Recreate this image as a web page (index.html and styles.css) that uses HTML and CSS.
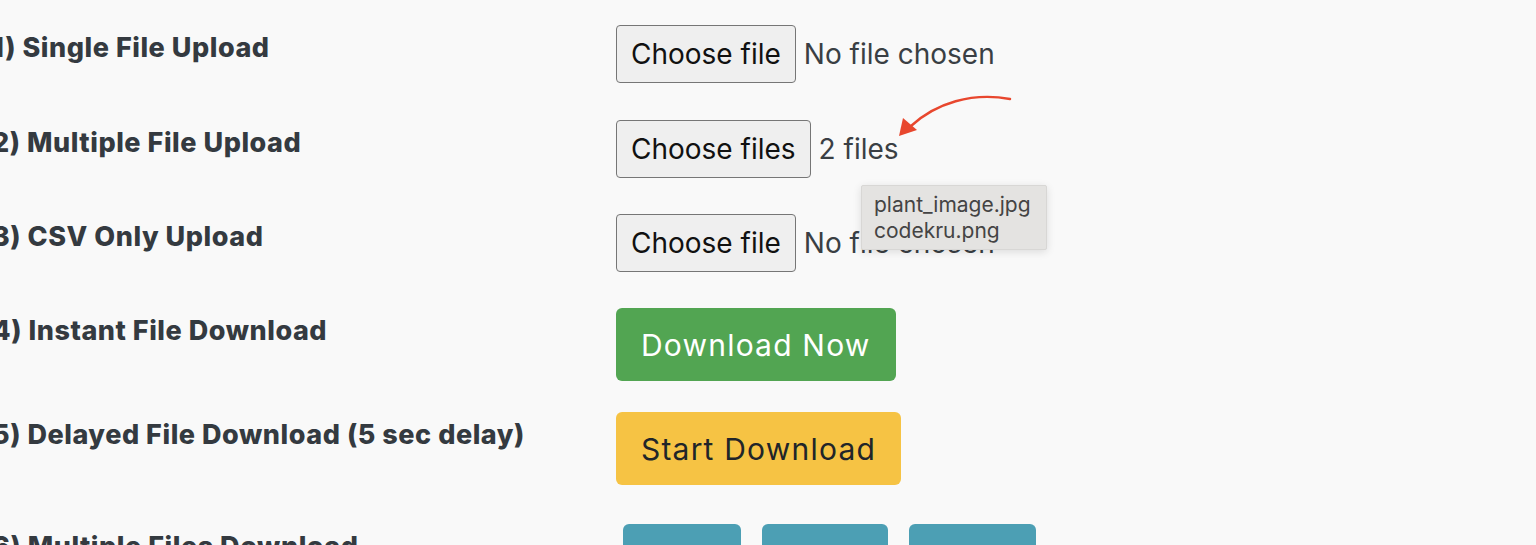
FILE: index.html
```html
<!DOCTYPE html>
<html lang="en">
<head>
  <meta charset="UTF-8">
  <title>File Upload and Download</title>
  <meta name="viewport" content="width=device-width, initial-scale=1.0">
  <link rel="stylesheet" href="styles.css">
</head>
<body>
<div class="page">
  <div class="row row-first">
    <div class="label">1) Single File Upload</div>
    <div class="control">
      <span class="file-btn">Choose file</span>
      <span class="file-name">No file chosen</span>
    </div>
  </div>
  <div class="row row-file">
    <div class="label">2) Multiple File Upload</div>
    <div class="control">
      <span class="file-btn">Choose files</span>
      <span class="file-name">2 files</span>
      <svg class="arrow" width="120" height="50" viewBox="0 0 120 50">
        <path d="M114 5 C 76 -2, 40 9, 15 32" fill="none" stroke="#e8472e" stroke-width="2.4" stroke-linecap="round"/>
        <path d="M3 42 L 7 24 L 21 36 Z" fill="#e8472e"/>
      </svg>
      <div class="tooltip">
        <div>plant_image.jpg</div>
        <div>codekru.png</div>
      </div>
    </div>
  </div>
  <div class="row row-file">
    <div class="label">3) CSV Only Upload</div>
    <div class="control">
      <span class="file-btn">Choose file</span>
      <span class="file-name">No file chosen</span>
    </div>
  </div>
  <div class="row row-now">
    <div class="label">4) Instant File Download</div>
    <div class="control">
      <button class="btn btn-green">Download Now</button>
    </div>
  </div>
  <div class="row row-delay">
    <div class="label">5) Delayed File Download (5 sec delay)</div>
    <div class="control">
      <button class="btn btn-yellow">Start Download</button>
    </div>
  </div>
  <div class="row">
    <div class="label">6) Multiple Files Download</div>
    <div class="control multi">
      <button class="btn btn-teal w1">File 1</button>
      <button class="btn btn-teal w2">File 2</button>
      <button class="btn btn-teal w3">File 3</button>
    </div>
  </div>
</div>
</body>
</html>
```

FILE: styles.css
```css
body {
  margin: 0;
  padding: 0;
  background: #f9f9f9;
  color: #343a40;
  font-family: 'Inter', sans-serif;
  overflow: hidden;
}
.page {
  margin-left: -8px;
  padding-top: 25px;
}
.row {
  display: flex;
  align-items: flex-start;
}
.row-first { height: 95px; }
.row-file { height: 94px; }
.row-now { height: 104px; }
.row-delay { height: 112px; }
.label {
  width: 624px;
  flex-shrink: 0;
  padding-top: 6px;
  font-size: 27px;
  font-weight: 800;
  color: #343a40;
  letter-spacing: 0.02em;
}
.control {
  display: flex;
  align-items: center;
  position: relative;
}
.file-btn {
  box-sizing: border-box;
  height: 58px;
  padding: 0 14px;
  display: flex;
  align-items: center;
  background: #efefef;
  border: 1.5px solid #767676;
  border-radius: 4px;
  color: #111;
  font-size: 28px;
}
.file-name {
  margin-left: 8px;
  font-size: 28px;
  color: #3a3f44;
}
.arrow {
  position: absolute;
  left: 280px;
  top: -26px;
}
.tooltip {
  position: absolute;
  left: 245px;
  top: 65px;
  width: 186px;
  box-sizing: border-box;
  padding: 6px 12px 5px;
  background: #e4e3e1;
  border: 1px solid #d8d7d5;
  border-radius: 2px;
  box-shadow: 0 2px 8px rgba(0, 0, 0, 0.12);
  font-size: 21px;
  line-height: 26px;
  color: #444;
  z-index: 2;
}
.btn {
  border: none;
  border-radius: 6px;
  font-family: 'Inter', sans-serif;
  font-size: 30px;
  letter-spacing: 0.04em;
  height: 73px;
  padding: 0 25px;
  cursor: pointer;
}
.btn-green { background: #52a552; color: #fff; }
.btn-yellow { background: #f6c344; color: #212529; }
.btn-teal {
  background: #4c9fb4;
  color: #fff;
  padding: 0 10px;
  white-space: nowrap;
}
.multi {
  gap: 21px;
  padding-left: 7px;
}
.w1 { width: 118px; }
.w2 { width: 126px; }
.w3 { width: 127px; }
```
